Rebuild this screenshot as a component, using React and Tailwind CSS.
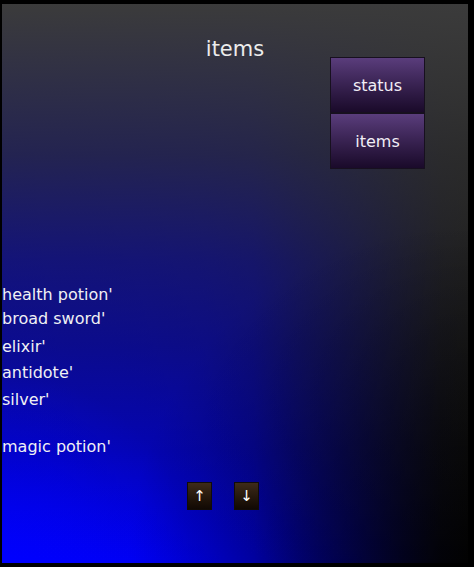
const items = [
  { name: "health potion'", gap: "" },
  { name: "broad sword'", gap: "" },
  { name: "elixir'", gap: "mt-[4px]" },
  { name: "antidote'", gap: "mt-[2px]" },
  { name: "silver'", gap: "mt-[3px]" },
  { name: "magic potion'", gap: "mt-[23px]" },
];

function MenuButton({ label }) {
  return (
    <button className="w-[95px] h-[56px] pt-[2px] border border-[#17101f] bg-gradient-to-b from-[#5a3d7c] to-[#1a0a2a] text-[16px] text-[#f2eef6] flex items-center justify-center">
      {label}
    </button>
  );
}

function ArrowButton({ glyph }) {
  return (
    <button className="w-[25px] h-[28px] border border-[#120c08] bg-gradient-to-b from-[#3e2b19] to-[#110904] text-[15px] text-white flex items-center justify-center leading-none">
      {glyph}
    </button>
  );
}

export default function App() {
  return (
    <div className="w-[474px] h-[567px] bg-black pt-[4px] pl-[2px] font-['DejaVu_Sans',sans-serif]">
      <div className="w-[466px] h-[559px] flex flex-col bg-[radial-gradient(circle_at_0%_100%,rgba(0,0,255,0.6)_0px,rgba(0,0,255,0)_190px),radial-gradient(circle_at_100%_100%,rgba(0,0,0,0.55)_0px,rgba(0,0,0,0.35)_150px,rgba(0,0,0,0)_340px),linear-gradient(to_bottom,rgba(59,59,59,1)_0%,rgba(43,43,43,0.82)_27%,rgba(32,32,32,0.6)_46%,rgba(23,23,23,0.48)_61%,rgba(12,12,12,0.28)_80%,rgba(5,5,5,0.1)_92%,rgba(0,0,0,0)_100%),linear-gradient(to_right,rgba(0,0,255,1)_0%,rgba(0,0,255,0.95)_30%,rgba(0,0,255,0.9)_43%,rgba(0,0,255,0.82)_54%,rgba(0,0,255,0.62)_64%,rgba(0,0,255,0.42)_75%,rgba(0,0,255,0.2)_86%,rgba(0,0,255,0.05)_94%,rgba(0,0,255,0)_100%),linear-gradient(to_bottom,#3b3b3b,#040404)]">
        {/* header */}
        <div className="grid grid-cols-[1fr_auto_1fr]">
          <div />
          <h1 className="pt-[33px] text-[21px] leading-[25px] text-[#ececec]">items</h1>
          <div className="flex flex-col items-end pt-[53px] pr-[43px]">
            <MenuButton label="status" />
            <MenuButton label="items" />
          </div>
        </div>

        {/* inventory */}
        <ul className="mt-[114px] text-[16px] leading-[24px] text-[#f0f0f4]">
          {items.map((it) => (
            <li key={it.name} className={it.gap}>
              {it.name}
            </li>
          ))}
        </ul>

        {/* paging */}
        <div className="flex gap-[22px] mt-[23px] ml-[185px]">
          <ArrowButton glyph="↑" />
          <ArrowButton glyph="↓" />
        </div>
      </div>
    </div>
  );
}
